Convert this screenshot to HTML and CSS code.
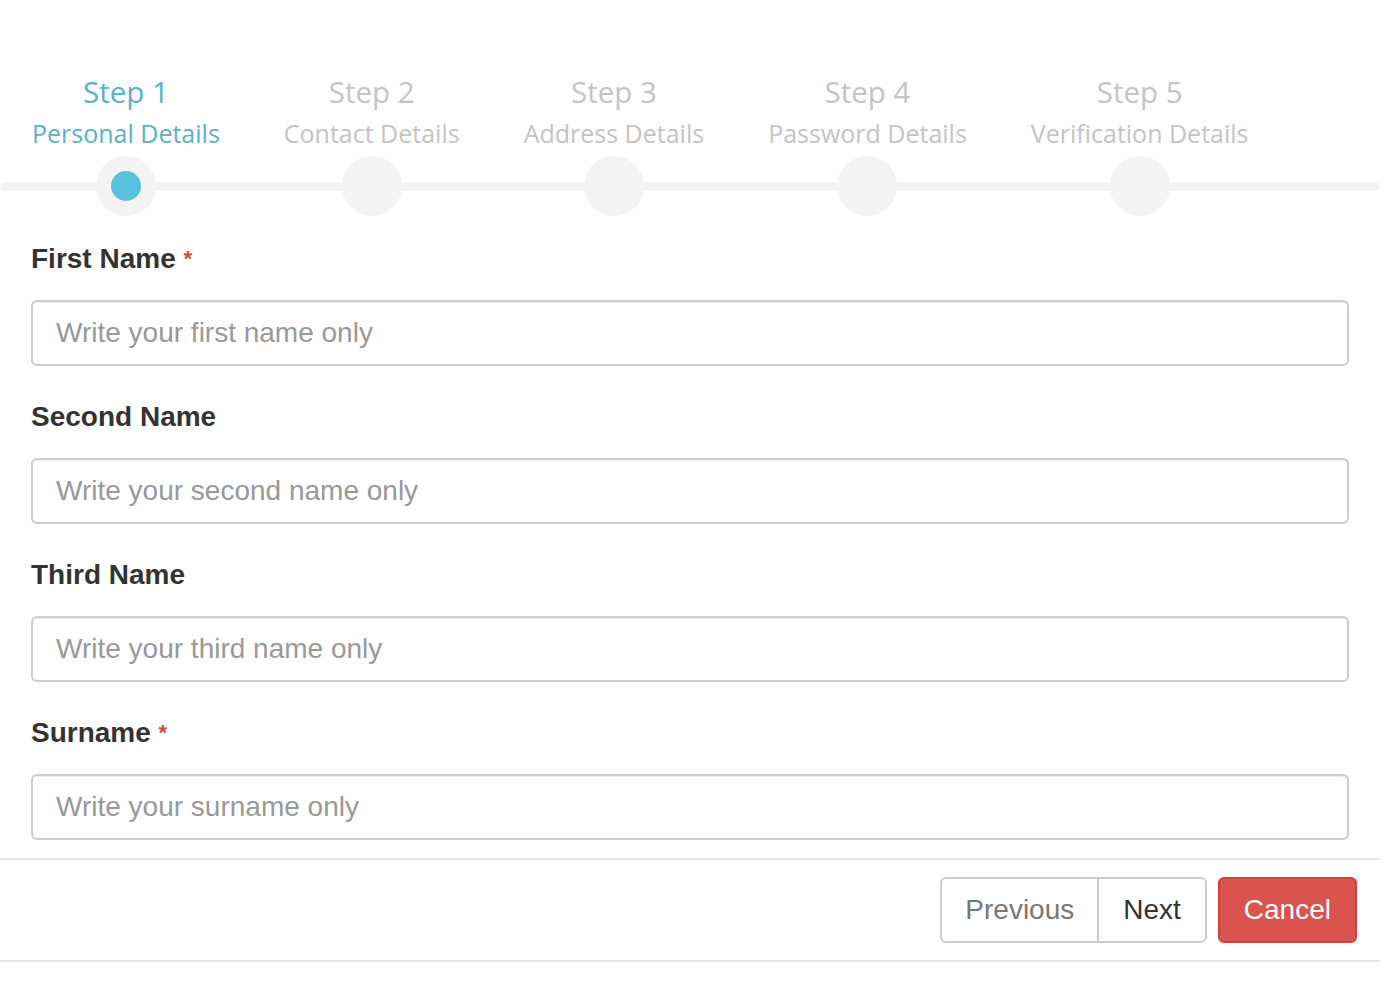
FILE: index.html
```html
<!DOCTYPE html>
<html lang="en">
<head>
  <meta charset="UTF-8">
  <meta name="viewport" content="width=device-width, initial-scale=1.0">
  <title>Registration Wizard</title>
  <link rel="stylesheet" href="styles.css">
</head>
<body>
  <div class="wizard">
    <ul class="steps">
      <li class="step active">
        <div class="step-title">Step 1</div>
        <div class="step-sub">Personal Details</div>
        <div class="step-dot"><span></span></div>
      </li>
      <li class="step">
        <div class="step-title">Step 2</div>
        <div class="step-sub">Contact Details</div>
        <div class="step-dot"><span></span></div>
      </li>
      <li class="step">
        <div class="step-title">Step 3</div>
        <div class="step-sub">Address Details</div>
        <div class="step-dot"><span></span></div>
      </li>
      <li class="step">
        <div class="step-title">Step 4</div>
        <div class="step-sub">Password Details</div>
        <div class="step-dot"><span></span></div>
      </li>
      <li class="step">
        <div class="step-title">Step 5</div>
        <div class="step-sub">Verification Details</div>
        <div class="step-dot"><span></span></div>
      </li>
    </ul>

    <form class="form">
      <div class="field">
        <label for="first">First Name <span class="req">*</span></label>
        <input type="text" id="first" placeholder="Write your first name only">
      </div>
      <div class="field">
        <label for="second">Second Name</label>
        <input type="text" id="second" placeholder="Write your second name only">
      </div>
      <div class="field">
        <label for="third">Third Name</label>
        <input type="text" id="third" placeholder="Write your third name only">
      </div>
      <div class="field">
        <label for="surname">Surname <span class="req">*</span></label>
        <input type="text" id="surname" placeholder="Write your surname only">
      </div>
    </form>

    <div class="footer">
      <div class="btn-group">
        <button type="button" class="btn btn-prev">Previous</button>
        <button type="button" class="btn btn-next">Next</button>
      </div>
      <button type="button" class="btn btn-cancel">Cancel</button>
    </div>
  </div>
</body>
</html>
```

FILE: styles.css
```css
body {
  margin: 0;
  background: #fff;
  font-family: "Liberation Sans", Arial, sans-serif;
  color: #333;
}

.wizard {
  width: 1380px;
}

/* stepper */
.steps {
  position: relative;
  display: flex;
  list-style: none;
  margin: 0;
  padding: 74px 0 0;
}

.steps::before {
  content: "";
  position: absolute;
  left: 0;
  right: 0;
  top: 182px;
  height: 9px;
  border-radius: 5px;
  background: #f3f3f3;
}

.step {
  position: relative;
  padding: 0 32px;
  text-align: center;
  font-family: "Open Sans", sans-serif;
  color: #c4c4c4;
}

.step-title {
  font-size: 29.5px;
  line-height: 36px;
}

.step-sub {
  margin-top: 5px;
  font-size: 25px;
  line-height: 36px;
}

.step-dot {
  width: 60px;
  height: 60px;
  margin: 5px auto 0;
  border-radius: 50%;
  background: #f3f3f3;
  display: flex;
  align-items: center;
  justify-content: center;
}

.step.active {
  color: #5ab1cb;
}

.step.active .step-dot span {
  width: 30px;
  height: 30px;
  border-radius: 50%;
  background: #5bc0de;
}

/* form */
.form {
  padding: 27px 31px 0;
}

.field {
  margin-bottom: 35px;
}

.field:last-child {
  margin-bottom: 0;
}

.field label {
  display: block;
  font-size: 28px;
  font-weight: bold;
  line-height: 32px;
  color: #333;
  margin-bottom: 25px;
}

.req {
  color: #cf4a40;
  font-size: 22px;
  vertical-align: top;
}

.field input {
  display: block;
  width: 100%;
  height: 66px;
  box-sizing: border-box;
  padding: 0 23px;
  border: 2px solid #ccc;
  border-radius: 6px;
  font-family: "Liberation Sans", Arial, sans-serif;
  font-size: 28px;
  color: #555;
  box-shadow: inset 0 1px 1px rgba(0, 0, 0, .075);
}

.field input::placeholder {
  color: #999;
}

/* footer */
.footer {
  margin-top: 18px;
  border-top: 2px solid #e5e5e5;
  border-bottom: 2px solid #e5e5e5;
  padding: 17px 23px 17px 0;
  display: flex;
  justify-content: flex-end;
  gap: 11px;
}

.btn-group {
  display: flex;
}

.btn {
  height: 66px;
  padding: 0 24px;
  font-family: "Liberation Sans", Arial, sans-serif;
  font-size: 28px;
  border: 2px solid #ccc;
  background: #fff;
  color: #333;
  border-radius: 6px;
  cursor: pointer;
}

.btn-prev {
  padding: 0 23px;
  color: #777;
  border-radius: 6px 0 0 6px;
}

.btn-next {
  margin-left: -2px;
  border-radius: 0 6px 6px 0;
}

.btn-cancel {
  background: #d9534f;
  border-color: #d43f3a;
  color: #fff;
}
```
